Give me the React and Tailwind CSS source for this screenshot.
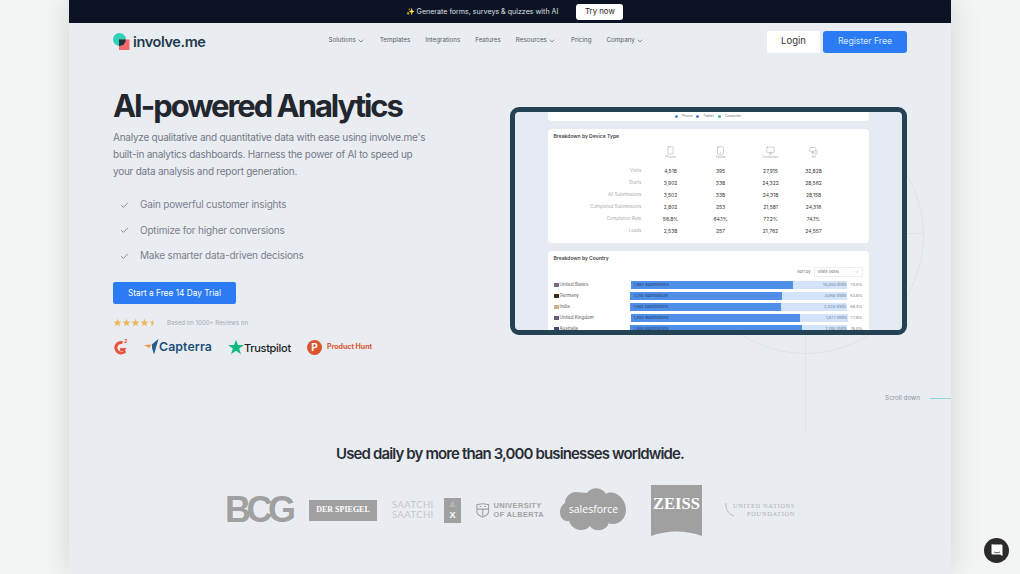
import { Check, ChevronDown, Smartphone, Tablet, Monitor, MonitorSmartphone } from "lucide-react";

const navItems = [
  { label: "Solutions", caret: true },
  { label: "Templates" },
  { label: "Integrations" },
  { label: "Features" },
  { label: "Resources", caret: true },
  { label: "Pricing" },
  { label: "Company", caret: true },
];

const perks = [
  "Gain powerful customer insights",
  "Optimize for higher conversions",
  "Make smarter data-driven decisions",
];

const deviceRows = [
  ["Visits", "4,518", "395", "27,915", "32,828"],
  ["Starts", "3,902", "338", "24,322", "28,562"],
  ["All Submissions", "3,502", "338", "24,318", "28,158"],
  ["Completed Submissions", "2,802", "253", "21,581", "24,316"],
  ["Completion Rate", "56.8%", "64.1%", "77.2%", "74.1%"],
  ["Leads", "2,538", "257", "21,762", "24,557"],
];

const countries = [
  { name: "United States", flag: "bg-[#7b6a86]", subs: "7,994 submissions", fill: "w-[75%]", visits: "10,050 visits", rate: "75.6%" },
  { name: "Germany", flag: "bg-[#3a2a20]", subs: "3,210 submissions", fill: "w-[70%]", visits: "3,068 visits", rate: "63.9%" },
  { name: "India", flag: "bg-[#c9b48a]", subs: "1,682 submissions", fill: "w-[69.6%]", visits: "2,420 visits", rate: "69.4%" },
  { name: "United Kingdom", flag: "bg-[#6a5a7a]", subs: "1,463 submissions", fill: "w-[78%]", visits: "1,877 visits", rate: "77.9%" },
  { name: "Australia", flag: "bg-[#3a4a7a]", subs: "1,009 submissions", fill: "w-[79%]", visits: "1,293 visits", rate: "78.0%" },
];

const deviceIcons = [
  { Icon: Smartphone, label: "Phone" },
  { Icon: Tablet, label: "Tablet" },
  { Icon: Monitor, label: "Computer" },
  { Icon: MonitorSmartphone, label: "All" },
];

const Star = ({ half }) => (
  <svg width="9" height="9" viewBox="0 0 24 24">
    <path
      d="M12 2l3 7 7.500.700-5.700 5 1.700 7.300L12 18l-6.500 4 1.700-7.300-5.700-5L9 9z"
      fill="#edb95e"
      style={half ? { clipPath: "inset(0 50% 0 0)" } : undefined}
    />
  </svg>
);

const Dashboard = () => (
  <div className="w-[397px] h-[228px] border-[5.5px] border-[#234354] rounded-[9px] bg-[#e6ebf3] overflow-hidden">
    <div className="w-[321px] ml-[32.5px] font-['Inter',sans-serif]">
      <div className="h-[9px] bg-white flex items-center justify-center gap-1 text-[3.500px] text-[#777] rounded-b-sm">
        <span className="w-[3px] h-[3px] rounded-full bg-[#4b8fd8]" />
        <span>Phone</span>
        <span className="w-[3px] h-[3px] rounded-full bg-[#5a78c8]" />
        <span>Tablet</span>
        <span className="w-[3px] h-[3px] rounded-full bg-[#4fb8a0]" />
        <span>Computer</span>
      </div>

      <div className="h-[114px] mt-2 bg-white rounded-sm px-[6px] pt-[2px]">
        <div className="text-[5px] leading-[10px] font-semibold text-[#444]">Breakdown by Device Type</div>
        <div className="flex mt-[5px]">
          <div className="w-[92px]" />
          {deviceIcons.map(({ Icon, label }) => (
            <div key={label} className="w-[50px] last:w-[36px] flex flex-col items-center text-[3.500px] text-[#aaa]">
              <Icon size={9} strokeWidth={1} color="#888" />
              <span className="leading-[5px]">{label}</span>
            </div>
          ))}
        </div>
        <div className="mt-[5.5px] flex flex-col">
          {deviceRows.map((row) => (
            <div key={row[0]} className="flex items-center h-[12px] text-[5px] text-[#333]">
              <div className="w-[89px] text-right text-[4.500px] text-[#aaa] pr-[1px]">{row[0]}</div>
              <div className="w-[3px]" />
              {row.slice(1).map((cell, i) => (
                <div key={i} className="w-[50px] last:w-[36px] text-center">{cell}</div>
              ))}
            </div>
          ))}
        </div>
      </div>

      <div className="h-[90px] mt-2 bg-white rounded-sm px-[6px] pt-[2px]">
        <div className="text-[5px] leading-[10px] font-semibold text-[#444]">Breakdown by Country</div>
        <div className="flex justify-end items-center gap-[3px] mt-[3px] h-[11px] text-[4px] text-[#666]">
          <span>Sort by</span>
          <div className="w-[49px] h-[10px] border border-[#eee] flex items-center justify-between px-[3px]">
            <span>Visits (less)</span>
            <ChevronDown size={4} />
          </div>
        </div>
        <div className="flex flex-col gap-[3px] mt-[4px]">
          {countries.map((c) => (
            <div key={c.name} className="flex items-center h-[8px] text-[4.500px] text-[#555]">
              <div className="w-[77px] flex items-center gap-[1px]">
                <span className={`w-[5px] h-[4px] ${c.flag}`} />
                <span>{c.name}</span>
              </div>
              <div className="w-[217px] h-[8px] bg-[#d3e3f9] flex items-center justify-between text-[4px]">
                <div className={`${c.fill} h-[8px] bg-[#4f8fe8] text-[#1d3a66] pl-[3px] leading-[8px]`}>{c.subs}</div>
                <span className="pr-[1px] text-[#6c7f99]">{c.visits}</span>
              </div>
              <span className="ml-[3px] text-[4px] text-[#777]">{c.rate}</span>
            </div>
          ))}
        </div>
      </div>
    </div>
  </div>
);

const Reviews = () => (
  <div className="flex items-center mt-[8px] h-6">
    <div className="flex items-center w-[31px]">
      <svg width="16" height="19" viewBox="0 0 18 21">
        <path d="M15 15.500A7.600 7.600 0 1 1 11.500 3.500l-1.600 3A4.300 4.300 0 1 0 13 13z" fill="#e8553d" />
        <path d="M8 11h7l-2 3.500H8z" fill="#e8553d" />
        <text x="12.500" y="6" fontSize="6" fontWeight="700" fill="#e8553d" fontFamily="Inter, sans-serif">2</text>
      </svg>
    </div>
    <svg width="15" height="16" viewBox="0 0 15 16">
      <path d="M0 6l8-.5L5 9z" fill="#f59a46" />
      <path d="M8 5.500L14.500 0 8 8z" fill="#4fa8dc" />
      <path d="M8 5.500L14.500 0 10 15.500 8 9z" fill="#1e5f8e" />
    </svg>
    <span className="w-[54px] text-[12.300px] font-semibold text-[#1e4f79] tracking-[0.1px]">Capterra</span>
    <svg width="16" height="16" viewBox="0 0 24 24" className="ml-[15px]">
      <path d="M12 1l3 8h9l-7.300 5.300 2.800 8.700L12 17.700 4.500 23l2.800-8.700L0 9h9z" fill="#10b981" />
    </svg>
    <span className="w-[47px] text-[11px] font-medium text-[#1d1d1d] tracking-[-0.3px] mt-[3px] whitespace-nowrap">Trustpilot</span>
    <div className="w-[15px] h-[15px] rounded-full bg-[#d9552f] ml-[16px] flex items-center justify-center text-white text-[10px] font-bold">P</div>
    <span className="ml-[5px] text-[7px] font-bold text-[#d9552f]">Product Hunt</span>
  </div>
);

const BrandLogos = () => (
  <div className="flex items-center h-[52px] pl-[156px] text-[#a0a0a0]">
    <div className="w-[67px] text-[36px] leading-none font-bold tracking-[-4.500px] font-['Liberation_Sans',sans-serif]">BCG</div>
    <div className="w-[68px] h-[21px] ml-[17px] bg-[#a0a0a0] text-white text-[8px] font-bold flex items-center justify-center whitespace-nowrap font-['Liberation_Serif',serif]">DER SPIEGEL</div>
    <div className="w-[69px] ml-[15px] flex items-center">
      <div className="w-[52px] text-[9.500px] leading-[10px] tracking-[0.4px] text-[#c4c6ca] font-['Lato',sans-serif]">
        <div>SAATCHI</div>
        <div>SAATCHI</div>
      </div>
      <div className="w-[17px] h-[25px] bg-[#a0a0a0] text-white flex flex-col items-center justify-center leading-[11px] font-['Liberation_Sans',sans-serif]">
        <span className="text-[8px] text-[#ccc]">&amp;</span>
        <span className="text-[9px] font-bold">X</span>
      </div>
    </div>
    <div className="w-[68px] ml-[15px] flex items-center gap-[4px]">
      <svg width="15" height="17" viewBox="0 0 15 17" fill="none" stroke="#a0a0a0" strokeWidth="1.200">
        <path d="M1 2c2 0 4-1 6.500-1S12 2 14 2v8c0 3-4 5-6.500 6C5 15 1 13 1 10z" />
        <path d="M1 7h13M7.500 7v8M4 4h2M9 4h2" />
      </svg>
      <div className="text-[7.500px] leading-[9px] font-bold tracking-[0.3px] text-[#a3a3a3] whitespace-nowrap font-['Liberation_Sans',sans-serif]">
        <div>UNIVERSITY</div>
        <div>OF ALBERTA</div>
      </div>
    </div>
    <div className="relative w-[69px] h-[48px] ml-[15px]">
      <svg width="69" height="48" viewBox="0 0 69 48">
        <path
          d="M28 7c3-4 8-6 13-4 3 1 5 3 6 5 3-2 8-2 12 1 5 3 8 9 8 15 0 8-6 14-13 14-2 0-3 0-4-1-2 5-7 8-12 7-3 0-6-2-7-4-3 4-9 5-14 3-4-2-6-5-7-8-5 1-9-3-9-9 0-4 2-7 5-9 0-6 5-11 11-11 4 0 8 1 11 1z"
          fill="#a0a0a0"
        />
      </svg>
      <span className="absolute inset-0 flex items-center justify-center text-white text-[10.500px] font-['Open_Sans',sans-serif]">salesforce</span>
    </div>
    <div className="relative w-[51px] h-[51px] ml-[23px]">
      <svg width="51" height="51" viewBox="0 0 51 51">
        <path d="M0 0h51v51c-16-6-35-6-51 0z" fill="#a0a0a0" />
      </svg>
      <span className="absolute left-0 right-0 top-[11px] text-center text-white text-[16.500px] font-bold leading-[16px] font-['Liberation_Serif',serif]">ZEISS</span>
    </div>
    <div className="relative w-[70px] ml-[23px] pl-[8px] text-[6.500px] leading-[8px] tracking-[0.6px] text-[#aeb1b7] whitespace-nowrap font-['Liberation_Serif',serif]">
      <svg width="10" height="15" viewBox="0 0 10 15" className="absolute left-0 top-0" fill="none" stroke="#b9bcc1">
        <path d="M1 1c-1 5 2 11 8 13" />
      </svg>
      <div>UNITED NATIONS</div>
      <div className="text-right">FOUNDATION</div>
    </div>
  </div>
);

const App = () => {
  return (
    <div className="w-[1020px] h-[574px] overflow-hidden bg-[#f3f5f5] font-['Inter',sans-serif]">
      <div className="relative w-[882px] h-[574px] ml-[69px] bg-[#e9edf2] shadow-[0_0_30px_rgba(0,0,0,0.13)]">
        {/* decorative circle and lines behind the hero */}
        <div className="absolute left-[618px] top-[117px] w-[237px] h-[237px] rounded-full border border-[#dfe3e9]" />
        <div className="absolute left-[736px] top-[130px] w-px h-[302px] bg-[#dfe3e9]" />
        <div className="absolute left-[838px] top-[233px] w-[18px] h-px bg-[#dfe3e9]" />

        <div className="relative h-[23px] pl-[9px] bg-[#0b1324] flex items-center justify-center gap-[18px] text-white">
          <span className="text-[#dfe1e6] text-[7.100px] mt-[1px]">✨ Generate forms, surveys &amp; quizzes with AI</span>
          <button className="w-[47px] h-[16px] bg-white rounded-[3px] text-[#222] text-[7.800px]">Try now</button>
        </div>

        <nav className="relative flex items-center h-[37px] px-[44px]">
          <div className="flex items-center w-[215.500px]">
            <svg width="17" height="17" viewBox="0 0 17 17">
              <circle cx="6.500" cy="6.500" r="6.500" fill="#2ed3b7" />
              <rect x="6" y="6.500" width="10.500" height="10.500" fill="#f86a6a" />
              <path d="M6 6.500h6.800A6.500 6.500 0 0 1 6 13z" fill="#24333f" />
            </svg>
            <span className="ml-[3px] text-[14.500px] font-semibold text-[#1f3a4d] tracking-[-0.4px]">involve.me</span>
          </div>
          <div className="flex items-center gap-[15px] text-[6.250px] text-[#555b66] mt-[-1px]">
            {navItems.map((item) => (
              <span key={item.label} className="flex items-center gap-[1px] whitespace-nowrap">
                {item.label}
                {item.caret && <ChevronDown size={8} />}
              </span>
            ))}
          </div>
          <div className="ml-auto flex items-center gap-[3px]">
            <button className="w-[53px] h-[22px] bg-white rounded-[2px] text-[9.500px] text-[#333]">Login</button>
            <button className="w-[84px] h-[22px] bg-[#2b7bf5] rounded-[3px] text-[8.700px] text-[#d8e6fb]">Register Free</button>
          </div>
        </nav>

        <div className="relative flex justify-between pl-[44px] pr-[44px] mt-[24px]">
          <div className="w-[340px]">
            <h1 className="text-[31px] leading-[44px] font-bold text-[#22262e] tracking-[-2.050px] whitespace-nowrap">AI-powered Analytics</h1>
            <p className="mt-[1px] text-[10px] leading-[17px] tracking-[-0.24px] text-[#737985] whitespace-nowrap">
              Analyze qualitative and quantitative data with ease using involve.me's
              <br />
              built-in analytics dashboards. Harness the power of AI to speed up
              <br />
              your data analysis and report generation.
            </p>
            <ul className="mt-[16px] flex flex-col gap-[8.500px]">
              {perks.map((perk) => (
                <li key={perk} className="flex items-center h-[17px] text-[10px] tracking-[-0.2px] text-[#7b808b]">
                  <Check size={9} strokeWidth={1.500} color="#444" className="ml-[7px] mt-[1px]" />
                  <span className="ml-[11px]">{perk}</span>
                </li>
              ))}
            </ul>
            <button className="mt-[18px] w-[123px] h-[22px] bg-[#2b7bf5] rounded-[2px] text-white text-[8.300px]">Start a Free 14 Day Trial</button>
            <div className="flex items-center mt-[14px] h-[9px]">
              <Star />
              <Star />
              <Star />
              <Star />
              <Star half />
              <span className="ml-[9px] text-[6.100px] text-[#a3a8b2]">Based on 1000+ Reviews on</span>
            </div>
            <Reviews />
          </div>
          <div className="pt-[23px]">
            <Dashboard />
          </div>
        </div>

        <div className="absolute right-0 top-[394px] flex items-center gap-[10px]">
          <span className="text-[6.300px] text-[#8b93a1]">Scroll down</span>
          <span className="w-[21px] h-[1px] bg-[#8fdad5]" />
        </div>

        <h2 className="absolute left-0 right-0 top-[444px] text-center text-[15px] leading-[20px] font-semibold text-[#2a2e36] tracking-[-0.87px]">
          Used daily by more than 3,000 businesses worldwide.
        </h2>
        <div className="absolute left-0 right-0 top-[484px]">
          <BrandLogos />
        </div>
      </div>

      <div className="fixed right-[11px] bottom-[11px] w-[25px] h-[25px] rounded-full bg-[#2b2b2b] flex items-center justify-center">
        <svg width="12" height="13" viewBox="0 0 12 13">
          <path d="M1.500 0.500h9a1 1 0 0 1 1 1v10.500l-2.500-1.500H1.500a1 1 0 0 1-1-1v-8.500a1 1 0 0 1 1-1z" fill="#fff" />
          <path d="M3 8c2 1 4 1 6 0" stroke="#2b2b2b" strokeWidth="0.800" fill="none" />
        </svg>
      </div>
    </div>
  );
};

export default App;
